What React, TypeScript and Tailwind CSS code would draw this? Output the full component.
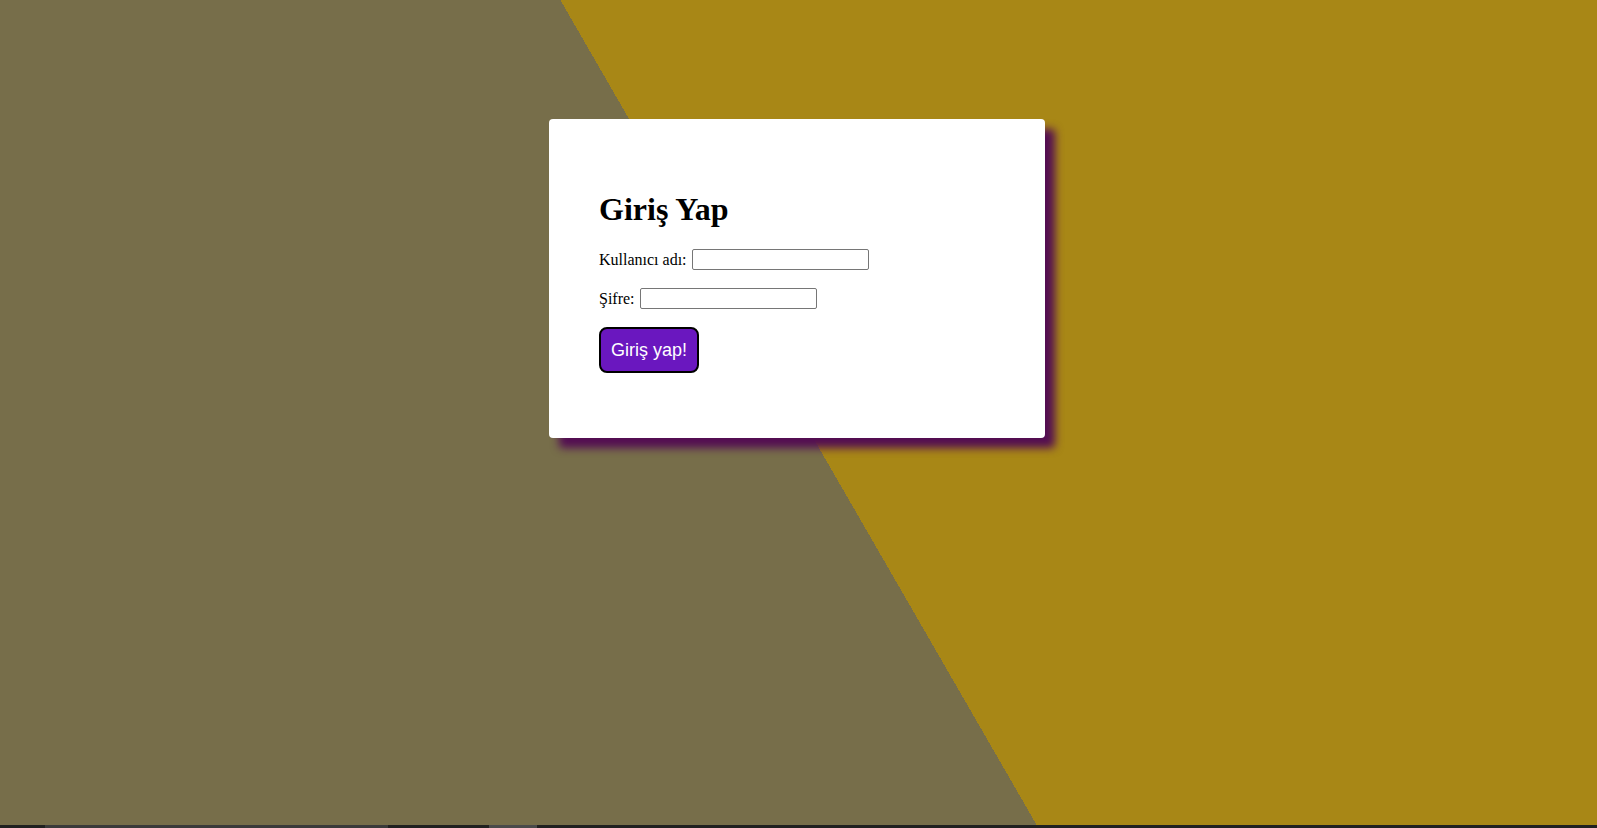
export default function App() {
  return (
    <div className="flex h-[828px] flex-col overflow-hidden">
      <div className="flex-1 bg-[linear-gradient(60deg,#776e4a_50%,#a88716_50%)] pt-[119px] pr-[3px]">
        <div className="mx-auto w-[496px] rounded-[4px] bg-white p-[50px] font-['Liberation_Serif',serif] text-[16px] text-black shadow-[10px_10px_8px_#530d52]">
          <h1 className="mt-[22px] mb-[20px] text-[32px] font-bold leading-[normal]">Giriş Yap</h1>
          <div className="mb-4 flex h-[23px] items-center leading-[normal]">
            <label htmlFor="kullanici">Kullanıcı adı:</label>
            <input
              id="kullanici"
              type="text"
              className="ml-[5px] h-[21px] w-[177px] rounded-[2px] border border-[#767676] bg-white px-[2px] font-['Liberation_Sans',sans-serif] text-[13.33px]"
            />
          </div>
          <div className="mb-[17px] flex h-[23px] items-center leading-[normal]">
            <label htmlFor="sifre">Şifre:</label>
            <input
              id="sifre"
              type="password"
              className="ml-[5px] h-[21px] w-[177px] rounded-[2px] border border-[#767676] bg-white px-[2px] font-['Liberation_Sans',sans-serif] text-[13.33px]"
            />
          </div>
          <div className="mb-[15px]">
            <button
              type="submit"
              className="rounded-[8px] border-2 border-black bg-[#6a17bf] px-[10px] py-[11px] font-['Liberation_Sans',Arial,sans-serif] text-[18px] leading-[20px] text-white"
            >
              Giriş yap!
            </button>
          </div>
        </div>
      </div>
      {/* alt şerit */}
      <div className="flex h-[3px] bg-[#202020]">
        <div className="ml-[45px] w-[343px] bg-[#3a3a3a]" />
        <div className="ml-[101px] w-[48px] bg-[#4a4a4a]" />
      </div>
    </div>
  );
}
